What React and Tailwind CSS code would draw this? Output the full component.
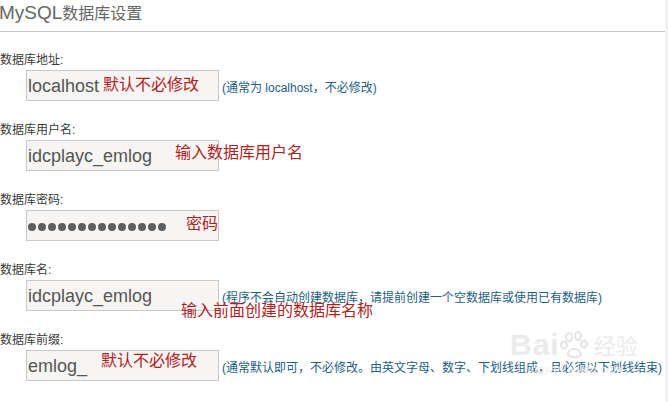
import React from 'react';

const font = { fontFamily: '"Liberation Sans", "Noto Sans CJK SC", sans-serif' };

const rows = [
  {
    label: '数据库地址:',
    value: 'localhost',
    note: '默认不必修改',
    noteClass: 'left-[76px] top-[6px]',
    hint: '(通常为 localhost，不必修改)',
  },
  {
    label: '数据库用户名:',
    value: 'idcplayc_emlog',
    note: '输入数据库用户名',
    noteClass: 'left-[148px] top-[4px]',
  },
  {
    label: '数据库密码:',
    password: true,
    note: '密码',
    noteClass: 'left-[159px] top-[5px]',
  },
  {
    label: '数据库名:',
    value: 'idcplayc_emlog',
    note: '输入前面创建的数据库名称',
    noteClass: 'left-[154px] top-[22px]',
    hint: '(程序不会自动创建数据库，请提前创建一个空数据库或使用已有数据库)',
  },
  {
    label: '数据库前缀:',
    value: 'emlog_',
    note: '默认不必修改',
    noteClass: 'left-[74px] top-[2px]',
    hint: '(通常默认即可，不必修改。由英文字母、数字、下划线组成，且必须以下划线结束)',
  },
];

const Field = ({ row }) => (
  <div className="flex flex-col">
    <div className="h-[14px] leading-[14px] text-[12px] text-[#3a3a3a] whitespace-nowrap">{row.label}</div>
    <div className="mt-[3px] ml-[26px] flex items-end">
      <div className="relative w-[193px] h-[31px] shrink-0 border border-[#c9c9c9] bg-[#f6f5f4] flex items-center pl-[1px]">
        {row.password ? (
          <div className="flex gap-[2px] items-center pt-[3px]">
            {Array.from({ length: 14 }).map((_, i) => (
              <span key={i} className="w-[8px] h-[8px] rounded-full bg-[#5f5f5f]" />
            ))}
          </div>
        ) : (
          <span className="text-[18px] leading-[29px] text-[#555] pt-[2px]">{row.value}</span>
        )}
        <span
          className={`absolute ${row.noteClass} text-[16px] leading-[16px] text-[#b0221f] whitespace-nowrap`}
        >
          {row.note}
        </span>
      </div>
      {row.hint && (
        <span className="ml-[3px] mb-[5px] text-[12px] leading-[16px] text-[#1e6082] whitespace-nowrap">
          {row.hint}
        </span>
      )}
    </div>
  </div>
);

const Paw = () => (
  <svg width="30" height="30" viewBox="0 0 30 30" className="inline-block">
    <g fill="none" stroke="#e4e4e4" strokeWidth="2">
      <ellipse cx="9" cy="7" rx="3" ry="4" />
      <ellipse cx="18" cy="6" rx="3" ry="4" />
      <ellipse cx="4" cy="15" rx="3" ry="3.5" />
      <ellipse cx="24" cy="14" rx="3" ry="3.5" />
      <path d="M8 25 C8 17 20 17 21 25 C18 28 11 28 8 25 Z" />
    </g>
  </svg>
);

export default function App() {
  return (
    <div className="relative w-[668px] h-[402px] overflow-hidden bg-white" style={font}>
      <div className="flex h-full">
        <div className="w-[665px] flex flex-col">
          <div className="h-[32px] border-b border-[#c8c8c8] flex items-start pt-[1px] text-[#666] whitespace-nowrap">
            <span className="text-[19px] leading-[24px] -ml-[1px]">MySQL</span>
            <span className="text-[16px] leading-[24px] pt-[1px]">数据库设置</span>
          </div>
          <div className="pt-[21px] flex flex-col gap-[22px]">
            {rows.map((row, i) => (
              <Field key={i} row={row} />
            ))}
          </div>
        </div>
        <div className="w-[3px] bg-[#f1f1f7]" />
      </div>

      {/* baidu watermark */}
      <div className="absolute left-[510px] top-[330px] flex flex-col items-center pointer-events-none">
        <div className="flex items-end text-[#ebebeb] leading-none">
          <span className="text-[30px] font-bold tracking-[1px]">Bai</span>
          <Paw />
          <span className="text-[22px] ml-[4px] mb-[2px]">经验</span>
        </div>
        <span className="text-[10px] text-[#ececec] mt-[2px] tracking-[1px]">jingyan.baidu.com</span>
      </div>
    </div>
  );
}
